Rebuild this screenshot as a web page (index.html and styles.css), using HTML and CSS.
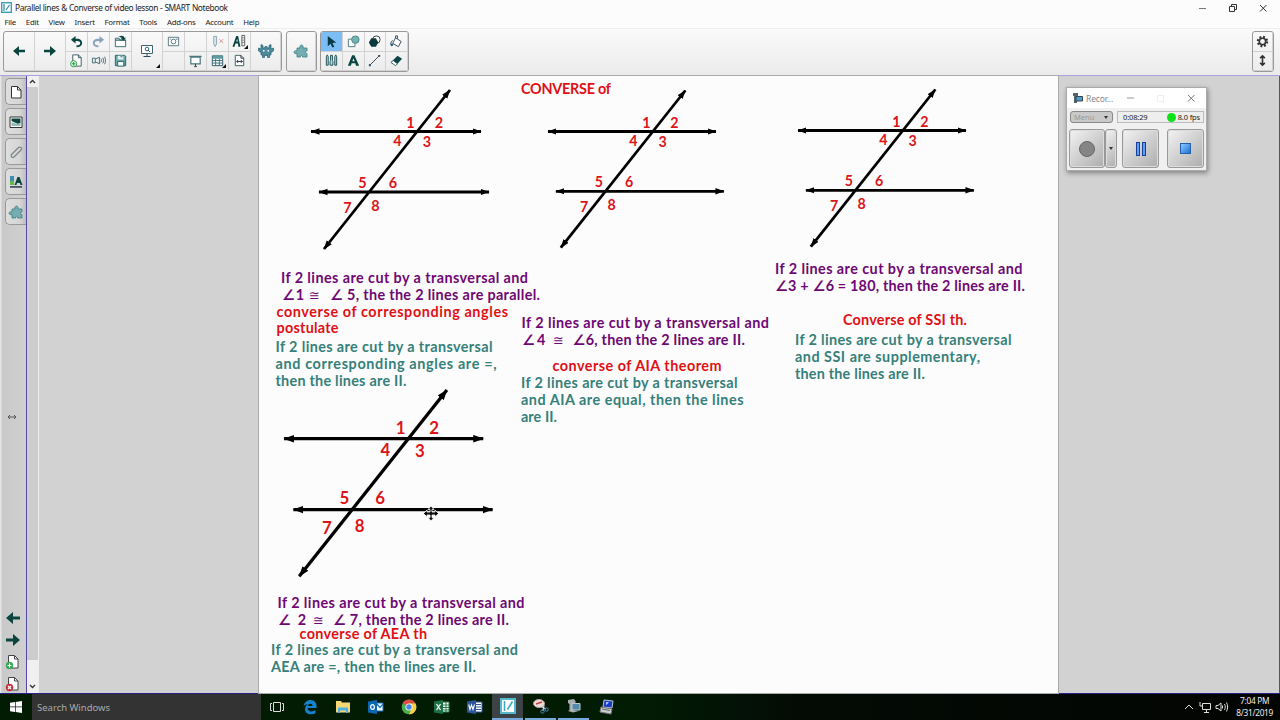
FILE: index.html
```html
<!DOCTYPE html>
<html lang="en">
<head>
	<meta charset="utf-8" />
	<title>Parallel lines &amp; Converse of video lesson - SMART Notebook</title>
	<link rel="stylesheet" href="styles.css">
</head>
<body>
	<div id="titlebar">
		<svg class="appIcon" width="11" height="11" viewBox="0 0 11 11"><rect x=".7" y=".7" width="9.6" height="9.6" fill="#fff" stroke="#3d9db8" stroke-width="1.4"/><path d="M3 2v7M5 8l3.500-5" stroke="#2e8ba8" stroke-width="1.200"/></svg>
		<span class="appTitle">Parallel lines &amp; Converse of video lesson - SMART Notebook</span>
		<svg class="winButtons" width="72" height="12" viewBox="0 0 72 12" fill="none" stroke="#333"><path d="M3 6.500h7" stroke="#777"/><path d="M33.500 4.500h5v5h-5zM35.500 4.500v-2h5v5h-2"/><path d="M64 3l6.500 6.500M70.500 3L64 9.500"/></svg>
	</div>
	<div id="menubar">
		<span>File</span><span>Edit</span><span>View</span><span>Insert</span><span>Format</span><span>Tools</span><span>Add-ons</span><span>Account</span><span>Help</span>
	</div>

	<div id="toolbar">
		<div class="group mainTools">
			<div class="tool big"><svg viewBox="0 0 16 16"><path d="M2 8l6-5v3.700h6v2.600H8V13z" fill="#0a4540"/></svg></div>
			<div class="tool big"><svg viewBox="0 0 16 16"><path d="M14 8L8 3v3.700H2v2.600h6V13z" fill="#0a4540"/></svg></div>
			<div class="tool"><svg viewBox="0 0 16 16"><path d="M2 6l5-4v3c5-.5 7 2 7 4.500S12 14 8 14v-2c3 0 4-1 4-2.500S10 7 7 7.500V10z" fill="#0a4540"/></svg></div>
			<div class="tool"><svg viewBox="0 0 16 16"><path d="M4 2h6l3 3v9H4z" fill="#fff" stroke="#395c60"/><path d="M10 2v3h3" fill="none" stroke="#395c60"/><circle cx="5" cy="11.500" r="3.300" fill="#e8f7e8" stroke="#2ba04a"/><path d="M3 11.500h4M5 9.500v4" stroke="#2ba04a" stroke-width="1.200"/></svg></div>
			<div class="tool"><svg viewBox="0 0 16 16"><path d="M14 6L9 2v3C4 4.500 2 7 2 9.500S4 14 8 14v-2c-3 0-4-1-4-2.500S6 7 9 7.500V10z" fill="#8aa4bc"/></svg></div>
			<div class="tool"><svg viewBox="0 0 16 16" fill="none" stroke="#456a75"><path d="M1.500 5.500h3v5h-3zM4.500 6.500l4.500-2v7l-4.500-2M10.500 6c1 1.300 1 2.700 0 4M12.500 5c1.200 2 1.200 4 0 6M14.500 4c1.300 2.500 1.300 5.500 0 8"/></svg></div>
			<div class="tool"><svg viewBox="0 0 16 16"><path d="M2.500 4.500h4l1 2h6v7h-11z" fill="#fff" stroke="#32666a"/><path d="M2.500 6.500h11" stroke="#32666a" stroke-width="1.500"/><path d="M6 3c3-2 6-1 6 1h2l-3 3-3-3h2" fill="#0a4540"/></svg></div>
			<div class="tool"><svg viewBox="0 0 16 16"><path d="M2.500 2.500h10l1 1v10h-11z" fill="#6eaaad" stroke="#276168"/><path d="M5 3h6v4H5z" fill="#e4f1f1"/><path d="M5 9h6.500v5H5z" fill="#f8ffff" stroke="#276168"/><path d="M8 4h2" stroke="#276168"/></svg></div>
			<div class="tool big corner"><svg viewBox="0 0 16 16"><path d="M2.500 2.500h11v8h-11z" fill="#fff" stroke="#3d6672"/><circle cx="8" cy="6" r="1.800" fill="none" stroke="#2f6a80"/><path d="M9 7l2 2M8 11v2M4.500 13.500h7" stroke="#2f4a55"/></svg></div>
			<div class="tool"><svg viewBox="0 0 16 16" fill="#fff" stroke="#56767a"><path d="M2.500 3.500h11v9h-11z"/><circle cx="8" cy="8" r="2.500"/><path d="M4 5.500h1M10.500 5.500h2"/></svg></div>
			<div class="tool"></div>
			<div class="tool"></div>
			<div class="tool"><svg viewBox="0 0 16 16"><path d="M1.500 3.500h13M3 4.500h10v7H3z" fill="#fff" stroke="#4a787d" stroke-width="1.300"/><path d="M8 11.500V14M6.500 14.500h3" stroke="#333"/></svg></div>
			<div class="tool"><svg viewBox="0 0 16 16"><path d="M4 2.500h3v8l-1.500 3L4 10.500z" fill="#dde7ed" stroke="#8aa3ae"/><path d="M10 5.500l4 4M14 5.500l-4 4" stroke="#e58c98"/></svg></div>
			<div class="tool corner"><svg viewBox="0 0 16 16"><path d="M2.500 3h11v10.500h-11z" fill="#fff" stroke="#285a63"/><path d="M3 3h10.500v3H3z" fill="#5e9aa1"/><path d="M2.500 8h11M2.500 10.700h11M6 6v7.500M10 6v7.500" stroke="#376f77"/></svg></div>
			<div class="tool corner"><svg viewBox="0 0 16 16"><path d="M.5 13.500L4.500 2h2l2.500 11.500H6.800L6.300 10H3.800l-1.200 3.500zM4.500 8h1.700L5.600 5z" fill="#0a4540"/><path d="M10.500 1.500h3v11h-3zM11 4h1.500M11 6.500h1.500M11 9h1.500" fill="#fff" stroke="#555"/></svg></div>
			<div class="tool"><svg viewBox="0 0 16 16"><path d="M3.500 2.500h6l3 3v8h-9z" fill="#fff" stroke="#375b60"/><path d="M9.500 2.500v3h3M5 9h6M6.500 7.500L5 9l1.500 1.500M9.500 7.500L11 9l-1.500 1.500" fill="none" stroke="#234"/></svg></div>
			<div class="tool big"><svg viewBox="0 0 16 16"><path d="M3 1.500l2 1V5h1.500l.5-1.500h2L9.500 5H11V2.500l2-1V6l2.500-1v3L13 9.500V12h-1.500v2.500h-2V12.500h-3v2h-2V12H3V9.500L.5 8V5L3 6z" fill="#4d8a9c" stroke="#276177" stroke-width=".7"/><path d="M5 7h1.500v1.500H5zM9.500 7H11v1.500H9.500z" fill="#fff"/></svg></div>
		</div>

		<div class="group addons">
			<div class="tool big"><svg viewBox="0 0 16 16"><use href="#puzzle"/></svg></div>
		</div>

		<div class="group drawTools">
			<div class="tool selected"><svg viewBox="0 0 16 16"><path d="M4 2l9 7-4 .5 2 4-2 1-2-4-3 2.500z" fill="#0a3a48"/></svg></div>
			<div class="tool"><svg viewBox="0 0 16 16"><path d="M2.500 5.500h7v8h-7z" fill="#fff" stroke="#4b7b7e"/><circle cx="10" cy="6" r="4" fill="#74b3b5" stroke="#4b8588"/></svg></div>
			<div class="tool"><svg viewBox="0 0 16 16"><circle cx="10" cy="6" r="4" fill="#fff" stroke="#333"/><path d="M4.500 4.500h5L12 9l-2.500 4.500h-5L2 9z" fill="#0a3a3a"/></svg></div>
			<div class="tool"><svg viewBox="0 0 16 16"><path d="M7 4l6 4-3 5.500-6-3.500zM7 4V2h2v3M4 7c-2 1-2 2-2 4" fill="#fff" stroke="#345"/><circle cx="3" cy="11.500" r="1.500" fill="#28637a"/></svg></div>
			<div class="tool"><svg viewBox="0 0 16 16"><path d="M2.500 4l1-2 1 2v9h-2zM7 2.500h2V8l.5 1v4h-3V9L7 8zM11.500 4l1-2 1 2v9h-2z" fill="#bdd7da" stroke="#174e54"/></svg></div>
			<div class="tool"><svg viewBox="0 0 16 16"><path d="M2 13.500L6.500 2.500h2.500L14 13.500h-3.300L9.900 11H6l-.8 2.500zM6.800 8.800h2.400L8 5.500z" fill="#0a4540"/></svg></div>
			<div class="tool"><svg viewBox="0 0 16 16"><path d="M3 13L13 3" stroke="#345"/><path d="M2 12h2v2H2zM12 2h2v2h-2z" fill="#246"/></svg></div>
			<div class="tool"><svg viewBox="0 0 16 16"><path d="M2 10l7-7 5 3-7 7.500z" fill="#0b4548"/><path d="M2 10l5 3.500 2-2L4.500 8z" fill="#fff" stroke="#0b4548" stroke-width=".7"/></svg></div>
		</div>

		<div class="group settings">
			<div class="tool"><svg viewBox="0 0 16 16"><circle cx="8" cy="8" r="5" fill="none" stroke="#333" stroke-width="2.200" stroke-dasharray="2 1.930"/><circle cx="8" cy="8" r="3.400" fill="none" stroke="#333" stroke-width="1.700"/></svg></div>
			<div class="tool"><svg viewBox="0 0 16 16"><path d="M8 3v10M5.500 5.500L8 3l2.500 2.500M5.500 10.500L8 13l2.500-2.500" fill="none" stroke="#333" stroke-width="1.700"/></svg></div>
		</div>
	</div>

	<div id="workspace">
		<div id="sidebar">
			<div class="tabs">
				<div class="tab"><svg viewBox="0 0 16 16"><path d="M3.500 2.500h6l3.500 3.500v8H3.500z" fill="#fff" stroke="#333"/><path d="M9.500 2.500V6H13" fill="none" stroke="#333"/></svg></div>
				<div class="tab"><svg viewBox="0 0 16 16"><path d="M2 3h12v10.500H2z" fill="#fff" stroke="#333"/><path d="M3.500 4.500h9V9l-2.500 1-6.500-3z" fill="#0a4540"/><path d="M3.500 8l5 2 4-1v3h-9z" fill="#8fbab9"/></svg></div>
				<div class="tab"><svg viewBox="0 0 16 16"><path d="M3 11l7-7c2-2 5 0 3 2l-7 7c-2 1.500-4-1-2-3l6-6" fill="none" stroke="#7c8688" stroke-width="1.300"/></svg></div>
				<div class="tab"><svg viewBox="0 0 16 16"><path d="M2 2h4v5H2z" fill="#3c8fb0"/><path d="M2 7h4v4H2z" fill="#65b941"/><path d="M2 12h12v1.800H2z" fill="#456"/><path d="M6.500 11l3-8h2l3 8h-2l-.7-2H9l-.5 2z" fill="#0a4540"/></svg></div>
				<div class="tab"><svg viewBox="0 0 16 16"><use href="#puzzle"/></svg></div>
			</div>
			<svg class="resizer" width="10" height="8" viewBox="0 0 10 8"><path d="M1 4h8M3 2L1 4l2 2M7 2l2 2-2 2" fill="none" stroke="#555"/></svg>
			<div class="pageButtons">
				<svg viewBox="0 0 16 16"><path d="M1 8l7-6v4.500h7v3H8V14z" fill="#0a4540"/></svg>
				<svg viewBox="0 0 16 16"><path d="M15 8L8 2v4.500H1v3h7V14z" fill="#0a4540"/></svg>
				<svg viewBox="0 0 16 16"><path d="M3.500 1.500h6l3.500 3.500v9H3.500z" fill="#fff" stroke="#444"/><path d="M9.500 1.500V5H13" fill="none" stroke="#444"/><circle cx="4.500" cy="11.500" r="3.700" fill="#34a853"/><path d="M2.500 11.500h4M4.500 9.500v4" stroke="#fff" stroke-width="1.200"/></svg>
				<svg viewBox="0 0 16 16"><path d="M3.500 1.500h6l3.500 3.500v9H3.500z" fill="#fff" stroke="#444"/><path d="M9.500 1.500V5H13" fill="none" stroke="#444"/><circle cx="4.500" cy="11.500" r="3.700" fill="#c62f38"/><path d="M3 10l3 3M6 10l-3 3" stroke="#fff" stroke-width="1.200"/></svg>
			</div>
		</div>
		<div id="scrollbar">
			<div class="scrollButton"><svg width="7" height="5" viewBox="0 0 7 5"><path d="M1 4l2.500-2.500L6 4" fill="none" stroke="#333" stroke-width="1.300"/></svg></div>
			<div class="scrollButton down"><svg width="7" height="5" viewBox="0 0 7 5"><path d="M1 1l2.500 2.500L6 1" fill="none" stroke="#333" stroke-width="1.300"/></svg></div>
		</div>

		<!-- the notebook page, user units are screen pixels -->
		<svg id="page" width="799" height="617" viewBox="259 76 799 617">
			<defs>
				<path id="puzzle" d="M4 5h3c-1-4 4-4 3 0h4v3c-2-.5-2 3 0 2.500V14H9.500c.5-2-2.500-2-2 0H4v-3.500c-4 1-4-3.500 0-2.500z" fill="#74aeb2" stroke="#3f7c83" stroke-width=".8"/>
				<marker id="arrow" markerUnits="userSpaceOnUse" markerWidth="10" markerHeight="8" refX="8.500" refY="3.500" orient="auto-start-reverse"><path d="M0 .3L9 3.500L0 6.700z"/></marker>
				<g id="transversal">
					<path class="line" d="M0 41.500H170"/>
					<path class="line" d="M8 102H178"/>
					<path class="line" d="M13 159L139 0"/>
					<g class="angles">
						<text x="99.500" y="37.500">1</text>
						<text x="128" y="37.500">2</text>
						<text x="116" y="57">3</text>
						<text x="86.500" y="56">4</text>
						<text x="51.500" y="97.500">5</text>
						<text x="82" y="97.500">6</text>
						<text x="36.500" y="123">7</text>
						<text x="64.500" y="121">8</text>
					</g>
				</g>
			</defs>

			<use href="#transversal" transform="translate(311 90)"/>
			<use href="#transversal" transform="translate(548 90.500) scale(.988)"/>
			<use href="#transversal" transform="translate(798 89.500) scale(.988)"/>
			<use href="#transversal" transform="translate(284 390) scale(1.172)"/>

			<text class="red" x="521" y="93.500" textLength="90">CONVERSE of</text>

			<!-- corresponding angles -->
			<text class="purple" x="281" y="283" textLength="247">If 2 lines are cut by a transversal and</text>
			<text class="purple" x="282" y="300" textLength="38">∠1 <tspan class="congruent">≅</tspan></text>
			<text class="purple" x="330" y="300" textLength="210">∠ 5, the the 2 lines are parallel.</text>
			<text class="red" x="276.500" y="317" textLength="231.500">converse of corresponding angles</text>
			<text class="red" x="276.500" y="333.400" textLength="62">postulate</text>
			<text class="teal" x="275.500" y="352" textLength="217">If 2 lines are cut by a transversal</text>
			<text class="teal" x="275.500" y="369" textLength="221">and corresponding angles are =,</text>
			<text class="teal" x="275.500" y="386" textLength="131">then the lines are II.</text>

			<!-- alternate interior angles -->
			<text class="purple" x="521.500" y="328" textLength="247.500">If 2 lines are cut by a transversal and</text>
			<text class="purple" x="522" y="345" textLength="42">∠4 <tspan class="congruent">≅</tspan></text>
			<text class="purple" x="572.500" y="345" textLength="172.500">∠6, then the 2 lines are II.</text>
			<text class="red" x="552.500" y="371" textLength="169">converse of AIA theorem</text>
			<text class="teal" x="521" y="388" textLength="216.500">If 2 lines are cut by a transversal</text>
			<text class="teal" x="521" y="405" textLength="222.500">and AIA are equal, then the lines</text>
			<text class="teal" x="521" y="422" textLength="36">are II.</text>

			<!-- same side interior -->
			<text class="purple" x="775" y="274" textLength="247.500">If 2 lines are cut by a transversal and</text>
			<text class="purple" x="775" y="291" textLength="250">∠3 + ∠6 = 180, then the 2 lines are II.</text>
			<text class="red" x="843" y="325" textLength="124">Converse of SSI th.</text>
			<text class="teal" x="795" y="345.400" textLength="216.500">If 2 lines are cut by a transversal</text>
			<text class="teal" x="795" y="362.400" textLength="185">and SSI are supplementary,</text>
			<text class="teal" x="795" y="379" textLength="130">then the lines are II.</text>

			<!-- alternate exterior angles -->
			<text class="purple" x="277.500" y="608" textLength="247">If 2 lines are cut by a transversal and</text>
			<text class="purple" x="278" y="625" textLength="46">∠ 2 <tspan class="congruent">≅</tspan></text>
			<text class="purple" x="333" y="625" textLength="176">∠ 7, then the 2 lines are II.</text>
			<text class="red" x="299.500" y="639" textLength="127.500">converse of AEA th</text>
			<text class="teal" x="271" y="655.400" textLength="247">If 2 lines are cut by a transversal and</text>
			<text class="teal" x="271" y="672.400" textLength="205">AEA are =, then the lines are II.</text>

			<!-- move cursor -->
			<path d="M431 506l3 3.500h-2v2.500h3v-2l3.500 3.500-3.500 3.500v-2h-3v2.500h2l-3 3.500-3-3.500h2V515h-3v2l-3.500-3.500 3.500-3.500v2h3v-2.500h-2z" fill="#111" stroke="#fff" stroke-width=".8"/>
		</svg>

		<div id="recorder">
			<div class="recTitle">
				<svg width="11" height="12" viewBox="0 0 11 12"><path d="M1 1h5v3H1zM2 4h3v7H2z" fill="#59656c"/><path d="M4 4.500h6.500v4.500H4z" fill="#4ba0c5" stroke="#345"/></svg>
				<span>Recor...</span>
				<svg class="recWin" width="72" height="10" viewBox="0 0 72 10" fill="none"><path d="M2 5h7" stroke="#999"/><path d="M32.500 2.500h6v6h-6z" stroke="#eee"/><path d="M63 2l6.500 6.500M69.500 2L63 8.500" stroke="#777"/></svg>
			</div>
			<div class="recStatus">
				<div class="recMenu"><span>Menu</span><i class="caret"></i></div>
				<div class="recInfo"><span>0:08:29</span><i class="led"></i><span>8.0 fps</span></div>
			</div>
			<div class="recButtons">
				<div class="recButton record"><i></i></div>
				<div class="recButton drop"><i class="caret"></i></div>
				<div class="recButton pause"><i></i><i></i></div>
				<div class="recButton stop"><i></i></div>
			</div>
		</div>
	</div>

	<div id="taskbar">
		<div class="start"><svg width="12" height="12" viewBox="0 0 12 12"><path d="M0 1.700L5 1v4.600H0zM5.700.9L12 0v5.600H5.700zM0 6.300h5V11l-5-.7zM5.700 6.300H12V12l-6.300-.9z" fill="#fff"/></svg></div>
		<div class="search">Search Windows</div>
		<div class="apps">
			<div class="app"><svg viewBox="0 0 16 16"><path d="M4.500 3.500h7v9h-7zM3 4.500H1.500v7H3M13 4.500h1.500v7H13" fill="none" stroke="#ddd"/></svg></div>
			<div class="app"><svg viewBox="0 0 16 16"><path d="M1.500 7C2.500 3.500 5 1 8.500 1c4 0 6 3 6 6v2h-9c0 4 5 4 8 2.300v3C8 16.500 3 15 3 10c0-3 2-4.500 4-5-3 0-4.500 1-5.500 2zM6 7h4.500C10.500 4 6.500 4 6 7z" fill="#1583cf"/></svg></div>
			<div class="app"><svg viewBox="0 0 16 16"><path d="M1 2h5l1 1.500h8V13.500H1z" fill="#f6d774"/><path d="M3 8.500h10V14h-2v-2.500H5V14H3z" fill="#4ab2e4"/></svg></div>
			<div class="app"><svg viewBox="0 0 16 16"><path d="M8 4h7v8H8z" fill="#f5f8fb" stroke="#1673b9"/><path d="M9 5l3 3.500L15 5" fill="none" stroke="#1673b9" stroke-width="1.200"/><path d="M0 2.500L9 1v14l-9-1.500z" fill="#0b67b2"/><ellipse cx="4.500" cy="8" rx="1.900" ry="2.300" fill="none" stroke="#fff" stroke-width="1.300"/></svg></div>
			<div class="app"><svg viewBox="0 0 16 16"><circle cx="8" cy="8" r="7.300" fill="#4aae50"/><path d="M8 8L1.700 4.300A7.300 7.300 0 0 1 14.500 4.500H8z" fill="#df4b3e"/><path d="M14.500 4.500A7.300 7.300 0 0 1 8 15.300L11 9 8 4.500z" fill="#f8cf43"/><circle cx="8" cy="8" r="3.500" fill="#fff"/><circle cx="8" cy="8" r="2.700" fill="#4684ea"/></svg></div>
			<div class="app"><svg viewBox="0 0 16 16"><path d="M8 3h7v10H8z" fill="#fff" stroke="#237b4b"/><path d="M9 6h6M9 8.500h6M9 11h6M12 3v10" stroke="#237b4b"/><path d="M0 2.500L9 1v14l-9-1.500z" fill="#1d7044"/><path d="M2.500 5l4 6M6.500 5l-4 6" stroke="#fff" stroke-width="1.300"/></svg></div>
			<div class="app"><svg viewBox="0 0 16 16"><path d="M8 3h7v10H8z" fill="#fff" stroke="#2b579a"/><path d="M9 5.500h5M9 8h5M9 10.500h5" stroke="#2b579a"/><path d="M0 2.500L9 1v14l-9-1.500z" fill="#2b579a"/><path d="M1.700 5.500L3 10.500l1.500-4.500L6 10.500l1.500-5" fill="none" stroke="#fff" stroke-width="1.100"/></svg></div>
			<div class="app active"><svg viewBox="0 0 16 16"><path d="M1 1h14v14H1z" fill="#fff" stroke="#58b8cb" stroke-width="2"/><path d="M4.500 3v10M7.500 11.500l5-8" stroke="#3ba7bf" stroke-width="1.500"/></svg></div>
			<div class="app open"><svg viewBox="0 0 16 16"><ellipse cx="6" cy="5.500" rx="5.500" ry="4" fill="#ecdedb" stroke="#b7a0a0"/><path d="M3 6l6-2" stroke="#ca3d3d" stroke-width="1.500"/><path d="M7 8l6 3M11 7l-1 6" stroke="#ddd" stroke-width="1.200"/><circle cx="13.500" cy="11.500" r="1.700" fill="none" stroke="#438bc5"/><circle cx="9.500" cy="13.500" r="1.700" fill="none" stroke="#438bc5"/></svg></div>
			<div class="app open"><svg viewBox="0 0 16 16"><path d="M2 2l6-1 2 3-2 1.500v7l5 .5-6 1.500-5-1.500 1.500-1V6L2 5z" fill="#a7adaf"/><path d="M6 5.500h8v6.500H6z" fill="#548baa" stroke="#c1c9cd"/></svg></div>
			<div class="app"><svg viewBox="0 0 16 16"><path d="M5 1l9 1-1 7-9-1z" fill="#183cc8" stroke="#bac2cf"/><path d="M7 3l3 .3-3 3z" fill="#b7d1ff"/><path d="M2 8l11 2-1 5-11-2z" fill="#c9cdd0" stroke="#777"/><path d="M3 10l8 1.500" stroke="#666"/></svg></div>
		</div>
		<div class="tray">
			<svg width="46" height="14" viewBox="0 0 46 14" fill="none" stroke="#ddd"><path d="M2 9l4-4 4 4M19.500 3.500h8v6h-8zM17 2v4h3M23.500 9.500V12M21 12.500h5M33 5.500h2l3-2.500v8l-3-2.500h-2zM39.500 5.500v3M41.500 4c1 2 1 4 0 6M43.500 2.500c1.500 3 1.500 6 0 9"/></svg>
			<div class="clock"><span>7:04 PM</span><span>8/31/2019</span></div>
		</div>
	</div>
</body>
</html>
```

FILE: styles.css
```css
*{
	box-sizing: border-box;
}

body{
	margin: 0;
	width: 1280px;
	height: 720px;
	overflow: hidden;
	display: flex;
	flex-direction: column;
	background: #fcfcfc;
	font-family: "Noto Sans", "Open Sans", sans-serif;
	font-size: 8px;
	color: #222;
}

svg{
	display: block;
	flex: none;
}

#titlebar{
	height: 15px;
	display: flex;
	align-items: center;
	padding-left: 1px;
}

.appTitle{
	margin-left: 3px;
	font-size: 8.4px;
	white-space: nowrap;
	letter-spacing: -.4px;
	word-spacing: .3px;
}

.winButtons{
	margin-left: auto;
	margin-right: 12px;
}

#menubar{
	height: 13px;
	display: flex;
	align-items: center;
	gap: 9.8px;
	padding-left: 4.5px;
	font-size: 7.8px;
	letter-spacing: -.24px;
}

#toolbar{
	height: 48px;
	display: flex;
	align-items: flex-start;
	gap: 3.5px;
	padding: 2px 6px 0 3px;
	background: linear-gradient(#fafafa, #ebebeb);
	border-top: 1px solid #eee;
	border-bottom: 1px solid #aaa0e0;
}

.group{
	height: 41px;
	display: grid;
	grid-template-rows: 1fr 1fr;
	grid-auto-flow: column;
	border: 1px solid #999;
	border-radius: 3px;
	overflow: hidden;
	background: linear-gradient(#f9f9f9, #ececec);
}

.mainTools{
	width: 279px;
	grid-template-columns: 31px 31px 22px 22px 22px 31px 22px 22px 22px 22px 1fr;
}

.addons{
	width: 31px;
}

.drawTools{
	width: 89px;
	grid-template-columns: repeat(4, 1fr);
	grid-auto-flow: row;
}

.settings{
	width: 22px;
	margin-left: auto;
}

.tool{
	position: relative;
	display: flex;
	align-items: center;
	justify-content: center;
	border-right: 1px solid #d2d2d2;
	border-bottom: 1px solid #d2d2d2;
}

.tool svg{
	width: 15px;
	height: 15px;
}

.big svg{
	width: 16px;
	height: 16px;
}

.big{
	grid-row: span 2;
}

.selected{
	background: #7dbdf5;
}

.corner::after{
	content: "";
	position: absolute;
	right: 2px;
	bottom: 2px;
	border: 2px solid #111;
	border-top-color: transparent;
	border-left-color: transparent;
}

#workspace{
	position: relative;
	height: 617px;
	display: flex;
	background: #d2d2d2;
	border-right: 1px solid #5148a8;
}

#sidebar{
	width: 27px;
	display: flex;
	flex-direction: column;
	align-items: flex-end;
	border-right: 1px solid #5148a8;
	background: linear-gradient(to right, #e5e5e5 1px, #c9c9c9 2px, #d0d0d0);
}

.tabs{
	display: flex;
	flex-direction: column;
	gap: 3px;
	padding-top: 2px;
}

.tab{
	width: 21px;
	height: 27px;
	display: flex;
	align-items: center;
	justify-content: center;
	border: 1px solid #999;
	border-right: 0;
	border-radius: 5px 0 0 5px;
	background: linear-gradient(to right, #dedede, #d5d5d5 70%, #bdbdbd);
}

.tab svg{
	width: 16px;
	height: 16px;
}

.resizer{
	margin: 188px 9px 0 0;
}

.pageButtons{
	margin: auto 5px 1px 0;
	display: flex;
	flex-direction: column;
	gap: 6px;
}

.pageButtons svg{
	width: 16px;
	height: 16px;
}

#scrollbar{
	width: 12px;
	display: flex;
	flex-direction: column;
	justify-content: space-between;
	border-right: 1px solid #eee;
	background: #cdcdcd;
}

.scrollButton{
	height: 11px;
	display: flex;
	align-items: center;
	justify-content: center;
	background: #f0f0f0;
}

.down{
	height: 33px;
	align-items: flex-end;
	padding-bottom: 4px;
}

#page{
	margin-left: 220px;
	background: #fcfcfc;
	outline: 1px solid #aaa;
	font: bold 14.4px Lato, "DejaVu Sans", sans-serif;
}

.line{
	fill: none;
	stroke: #000;
	stroke-width: 2.8px;
	marker-start: url(#arrow);
	marker-end: url(#arrow);
}

.angles{
	fill: #dd1418;
	text-anchor: middle;
}

.congruent{
	font-weight: normal;
	font-size: 13px;
}

.purple{
	fill: #6e0874;
}

.red{
	fill: #e01015;
}

.teal{
	fill: #35807a;
}

/* Screen recorder window floats over the notebook */
#recorder{
	position: absolute;
	left: 1066px;
	top: 11px;
	width: 141px;
	height: 84px;
	border: 1px solid #aaa;
	background: #f0f0f0;
	box-shadow: 1px 2px 5px rgba(0,0,0,0.4);
}

.recTitle{
	height: 20px;
	display: flex;
	align-items: center;
	padding-left: 5px;
	background: #fff;
	color: #888;
	font-size: 8.5px;
}

.recTitle span{
	margin-left: 3px;
	letter-spacing: -.15px;
}

.recWin{
	margin-left: auto;
	margin-right: 9px;
}

.recStatus{
	height: 18px;
	display: flex;
	align-items: center;
	gap: 4px;
	padding: 0 2px 0 3px;
}

.recMenu{
	width: 43px;
	height: 12px;
	display: flex;
	align-items: center;
	justify-content: space-between;
	padding: 0 4px 0 3px;
	border: 1px solid #888;
	border-radius: 3px;
	background: #c9c9c9;
	color: #999;
	font-size: 7.5px;
}

.recInfo{
	flex: 1;
	height: 12px;
	display: flex;
	align-items: center;
	padding: 0 3px 0 5px;
	border: 1px solid #bbb;
	background: #eee;
	font-size: 7.5px;
	white-space: nowrap;
	letter-spacing: -.15px;
}

.led{
	width: 9px;
	height: 9px;
	margin: 0 2px 0 auto;
	border-radius: 50%;
	background: #0be314;
}

.caret{
	border: 2.5px solid transparent;
	border-top: 3px solid #333;
	border-bottom: 0;
}

.recButtons{
	display: flex;
	padding: 3px 2px 0;
}

.recButton{
	width: 37px;
	height: 39px;
	display: flex;
	align-items: center;
	justify-content: center;
	gap: 2px;
	border: 1px solid #999;
	border-radius: 3px;
	background: linear-gradient(135deg, #f3f3f3, #adadad);
	box-shadow: inset 0 0 0 1px #ddd;
}

.record{
	width: 36px;
}

.record i{
	width: 16px;
	height: 16px;
	border: 1px solid #666;
	border-radius: 50%;
	background: #858585;
}

.drop{
	width: 12px;
	margin-right: 5px;
}

.pause{
	margin-right: 8px;
}

.pause i{
	width: 4px;
	height: 14px;
	border: 1px solid #163e9a;
	background: #5f9eee;
}

.stop i{
	width: 11px;
	height: 11px;
	border: 1px solid #245faa;
	background: linear-gradient(135deg, #8ccbff, #1b70d7);
}

#taskbar{
	height: 27px;
	display: flex;
	border-top: 1px solid #27208a;
	background: linear-gradient(to right, #021c04 640px, #040b05 800px, #020402);
	color: #eee;
}

.start{
	width: 32px;
	display: flex;
	align-items: center;
	justify-content: center;
}

.search{
	width: 229px;
	padding-left: 5px;
	line-height: 27px;
	background: #333;
	color: #aaa;
	font-size: 9.5px;
}

.apps{
	display: flex;
}

.app{
	width: 31px;
	margin-right: 2px;
	display: flex;
	align-items: center;
	justify-content: center;
}

.app svg{
	width: 16px;
	height: 16px;
}

.active{
	background: #3c4245;
}

.active, .open{
	border-bottom: 2px solid #76aadd;
}

.tray{
	margin-left: auto;
	display: flex;
	align-items: center;
	gap: 5px;
	padding-right: 7px;
}

.tray svg{
	margin-right: 2px;
}

.clock{
	display: flex;
	flex-direction: column;
	align-items: center;
	font-size: 8.3px;
	line-height: 12px;
	letter-spacing: -.3px;
}
```
